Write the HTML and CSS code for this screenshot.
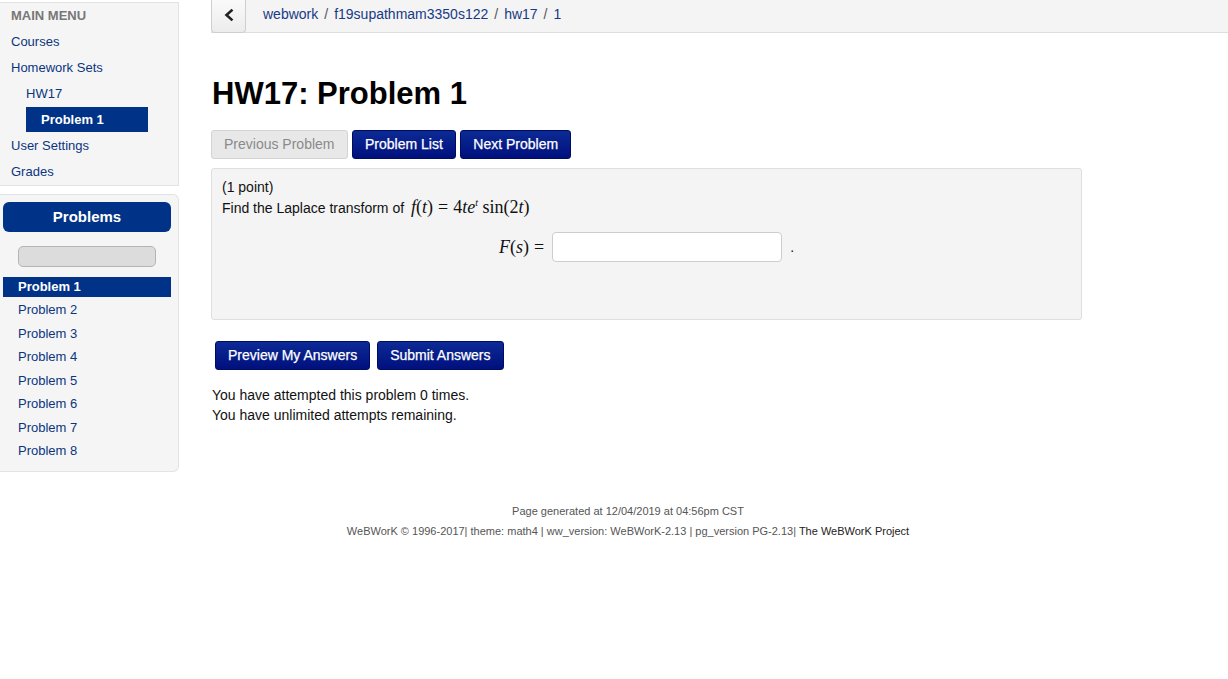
FILE: index.html
```html
<!DOCTYPE html>
<html>
<head>
<meta charset="utf-8">
<title>HW17: Problem 1</title>
<link rel="stylesheet" href="styles.css">
</head>
<body>
<div class="page">
  <aside class="sidebar">
    <div class="menu-box">
      <div class="menu-head">MAIN MENU</div>
      <a class="menu-item" href="#">Courses</a>
      <a class="menu-item" href="#">Homework Sets</a>
      <a class="menu-item sub" href="#">HW17</a>
      <a class="menu-item subsub active" href="#">Problem 1</a>
      <a class="menu-item" href="#">User Settings</a>
      <a class="menu-item" href="#">Grades</a>
    </div>
    <div class="problems-box">
      <div class="problems-head">Problems</div>
      <div class="gray-bar"></div>
      <ul class="plist">
        <li><a class="active" href="#">Problem 1</a></li>
        <li><a href="#">Problem 2</a></li>
        <li><a href="#">Problem 3</a></li>
        <li><a href="#">Problem 4</a></li>
        <li><a href="#">Problem 5</a></li>
        <li><a href="#">Problem 6</a></li>
        <li><a href="#">Problem 7</a></li>
        <li><a href="#">Problem 8</a></li>
      </ul>
    </div>
  </aside>
  <main class="main">
    <div class="crumbbar">
      <a class="back" href="#"><svg width="12" height="14" viewBox="0 0 12 14"><polyline points="8.5,2.5 3.5,7 8.5,11.5" fill="none" stroke="#222" stroke-width="2.6" stroke-linecap="square" stroke-linejoin="miter"/></svg></a>
      <div class="crumbs"><a href="#">webwork</a><span class="sep">/</span><a href="#">f19supathmam3350s122</a><span class="sep">/</span><a href="#">hw17</a><span class="sep">/</span><span class="cur">1</span></div>
    </div>
    <h1 class="title">HW17: Problem 1</h1>
    <div class="navbtns">
      <span class="btn disabled">Previous Problem</span>
      <a class="btn primary" href="#">Problem List</a>
      <a class="btn primary" href="#">Next Problem</a>
    </div>
    <div class="problem">
      <div class="line">(1 point)</div>
      <div class="line">Find the Laplace transform of <span class="math"><i>f</i>(<i>t</i>)<span class="eq">=</span>4<i>te</i><sup><i>t</i></sup> sin(2<i>t</i>)</span></div>
      <div class="answer-row">
        <span class="math big"><i>F</i>(<i>s</i>)<span class="eq">=</span></span>
        <span class="answer-input"></span>
        <span class="dot">.</span>
      </div>
    </div>
    <div class="submitbtns">
      <a class="btn primary" href="#">Preview My Answers</a>
      <a class="btn primary" href="#">Submit Answers</a>
    </div>
    <div class="attempts">
      <div>You have attempted this problem 0 times.</div>
      <div>You have unlimited attempts remaining.</div>
    </div>
  </main>
</div>
<footer class="footer">
  <div>Page generated at 12/04/2019 at 04:56pm CST</div>
  <div>WeBWorK © 1996-2017| theme: math4 | ww_version: WeBWorK-2.13 | pg_version PG-2.13| <a href="#">The WeBWorK Project</a></div>
</footer>
</body>
</html>
```
FILE: styles.css
```css
* { box-sizing: border-box; }
body {
  margin: 0;
  font-family: "Liberation Sans", Arial, sans-serif;
  font-size: 14px;
  color: #111;
  background: #fff;
}
a { text-decoration: none; }

.page { display: flex; align-items: flex-start; }

/* Sidebar */
.sidebar { width: 179px; flex: none; }
.menu-box {
  margin-top: 2px;
  background: #f5f5f5;
  border: 1px solid #e3e3e3;
  border-left: none;
}
.menu-head {
  line-height: 26px;
  padding-left: 11px;
  font-size: 13px;
  font-weight: bold;
  color: #777;
}
.menu-item {
  display: block;
  line-height: 26px;
  height: 26px;
  padding-left: 11px;
  font-size: 13px;
  color: #0b357f;
}
.menu-item.sub { padding-left: 26px; }
.menu-item.subsub {
  margin-left: 26px;
  width: 122px;
  padding-left: 15px;
}
.menu-item.active {
  background: #003387;
  color: #fff;
  font-weight: bold;
  height: 25px;
  line-height: 25px;
  margin-bottom: 1px;
}

.problems-box {
  margin-top: 8px;
  background: #f5f5f5;
  border: 1px solid #e3e3e3;
  border-left: none;
  border-radius: 0 6px 6px 0;
  padding: 7px 7px 10px 3px;
}
.problems-head {
  height: 30px;
  line-height: 30px;
  background: #003387;
  color: #fff;
  font-weight: bold;
  font-size: 15px;
  text-align: center;
  border-radius: 6px;
}
.gray-bar {
  margin: 14px 0 0 15px;
  width: 138px;
  height: 21px;
  background: #dcdcdc;
  border: 1px solid #b5b5b5;
  border-radius: 5px;
}
.plist { list-style: none; margin: 10px 0 0; padding: 0; }
.plist li { margin-bottom: 3.43px; }
.plist li:last-child { margin-bottom: 0; }
.plist a {
  display: block;
  height: 20px;
  line-height: 20px;
  padding-left: 15px;
  font-size: 13px;
  color: #0b357f;
}
.plist a.active { background: #003387; color: #fff; font-weight: bold; }

/* Main */
.main { flex: 1; margin-left: 32px; }
.crumbbar {
  display: flex;
  align-items: stretch;
  height: 33px;
  background: #f4f4f4;
  border-bottom: 1px solid #dedede;
}
.back {
  width: 35px;
  display: flex;
  align-items: center;
  justify-content: center;
  padding-bottom: 3px;
  background: linear-gradient(#fafafa, #ececec);
  border: 1px solid #cfcfcf;
  border-top: none;
  border-radius: 0 0 4px 4px;
  margin-bottom: -1px;
}
.crumbs {
  padding-left: 17px;
  line-height: 28px;
  font-size: 14px;
  color: #555;
}
.crumbs a { color: #173a86; }
.crumbs .sep { margin: 0 6px; color: #555; }
.crumbs .cur { color: #173a86; }

.title {
  margin: 43px 0 0;
  font-size: 31px;
  line-height: 36px;
  font-weight: bold;
  color: #000;
  padding-left: 1px;
}

.navbtns { display: flex; gap: 4.5px; margin-top: 18px; }
.btn {
  display: inline-block;
  height: 29px;
  line-height: 27px;
  padding: 0 12px;
  font-size: 14px;
  border-radius: 3px;
  border: 1px solid transparent;
  white-space: nowrap;
}
.btn.disabled {
  background: #e8e8e8;
  border-color: #d3d3d3;
  color: #8a8a8a;
}
.btn.primary {
  background: linear-gradient(#0c2a95, #00107d);
  border-color: #000c62;
  color: #fff;
  -webkit-text-stroke: 0.25px #fff;
}

.problem {
  margin-top: 9px;
  width: 871px;
  height: 152px;
  background: #f4f4f4;
  border: 1px solid #dedede;
  border-radius: 3px;
  padding: 8px 10px 0;
}
.line { line-height: 20px; font-size: 14px; }
.math { font-family: "Liberation Serif", "Times New Roman", serif; font-size: 18px; margin-left: 3px; }
.math .eq { margin: 0 5px; }
.math sup { font-size: 10px; vertical-align: 7px; line-height: 0; }
.math.big { font-size: 18px; margin-left: 0; }
.math.big .eq { margin-right: 0; }
.answer-row {
  display: flex;
  align-items: center;
  justify-content: center;
  margin-top: 14px;
  gap: 8px;
}
.answer-input {
  display: block;
  width: 230px;
  height: 30px;
  background: #fff;
  border: 1px solid #cdcdcd;
  border-radius: 4px;
}
.dot { font-size: 14px; }

.submitbtns { display: flex; gap: 7px; margin: 21px 0 0 4px; }
.attempts { margin-top: 15px; line-height: 20px; font-size: 14px; padding-left: 1px; }

.footer {
  margin-top: 29px;
  padding-left: 28px;
  text-align: center;
  font-size: 11px;
  line-height: 20px;
  color: #555;
}
.footer a { color: #222; }
```
